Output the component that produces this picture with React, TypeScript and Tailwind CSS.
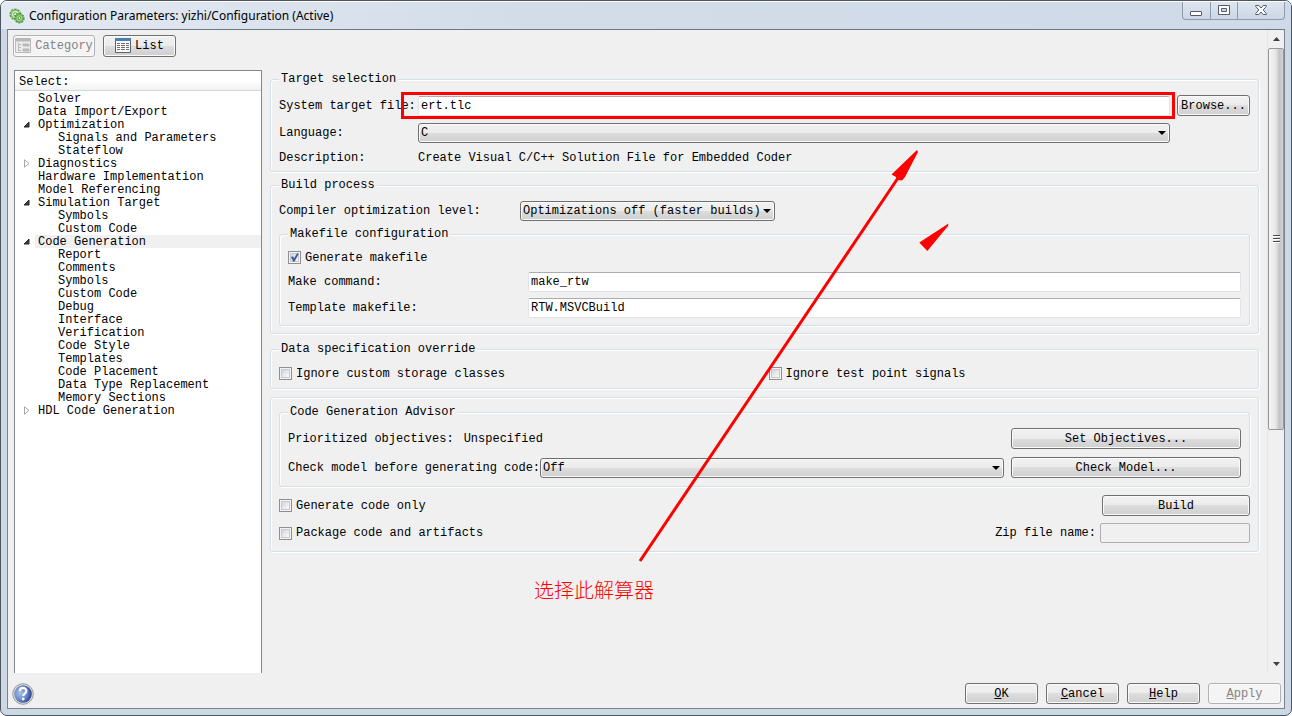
import type { ReactNode } from 'react'

type TreeItem = {
  label: string
  level: 1 | 2
  state?: 'open' | 'closed'
  selected?: boolean
}

const treeItems: TreeItem[] = [
  { label: 'Solver', level: 1 },
  { label: 'Data Import/Export', level: 1 },
  { label: 'Optimization', level: 1, state: 'open' },
  { label: 'Signals and Parameters', level: 2 },
  { label: 'Stateflow', level: 2 },
  { label: 'Diagnostics', level: 1, state: 'closed' },
  { label: 'Hardware Implementation', level: 1 },
  { label: 'Model Referencing', level: 1 },
  { label: 'Simulation Target', level: 1, state: 'open' },
  { label: 'Symbols', level: 2 },
  { label: 'Custom Code', level: 2 },
  { label: 'Code Generation', level: 1, state: 'open', selected: true },
  { label: 'Report', level: 2 },
  { label: 'Comments', level: 2 },
  { label: 'Symbols', level: 2 },
  { label: 'Custom Code', level: 2 },
  { label: 'Debug', level: 2 },
  { label: 'Interface', level: 2 },
  { label: 'Verification', level: 2 },
  { label: 'Code Style', level: 2 },
  { label: 'Templates', level: 2 },
  { label: 'Code Placement', level: 2 },
  { label: 'Data Type Replacement', level: 2 },
  { label: 'Memory Sections', level: 2 },
  { label: 'HDL Code Generation', level: 1, state: 'closed' },
]

function Button({ children, className = '', disabled }: { children: ReactNode; className?: string; disabled?: boolean }) {
  const look = disabled
    ? 'border-[#adb2b5] bg-[#f4f4f4] text-[#838383]'
    : 'border-[#707070] bg-[linear-gradient(#f2f2f2,#ebebeb_50%,#dddddd_50%,#cfcfcf)] text-black'
  return (
    <button
      type="button"
      disabled={disabled}
      className={`flex items-center justify-center whitespace-nowrap rounded-[3px] border shadow-[inset_0_0_0_1px_#fafafa] ${look} ${className}`}
    >
      {children}
    </button>
  )
}

function Select({ id, value, className = '' }: { id: string; value: string; className?: string }) {
  return (
    <div className={`relative h-5 ${className}`}>
      <select
        id={id}
        defaultValue={value}
        className="block h-5 w-full appearance-none rounded-[3px] border border-[#707070] bg-[linear-gradient(#f2f2f2,#ebebeb_50%,#dddddd_50%,#cfcfcf)] pl-[2px] leading-[18px] shadow-[inset_0_0_0_1px_#fafafa]"
      >
        <option>{value}</option>
      </select>
      <svg className="pointer-events-none absolute right-1 top-2 h-1 w-2" viewBox="0 0 8 4">
        <path d="M0 0h8L4 4z" fill="#000" />
      </svg>
    </div>
  )
}

function TextInput({ id, value }: { id: string; value: string }) {
  return (
    <input
      id={id}
      type="text"
      defaultValue={value}
      className="block h-5 w-full min-w-0 rounded-[2px] border border-[#e2e3ea] border-t-[#abadb3] bg-white px-[2px]"
    />
  )
}

function Checkbox({ label, checked }: { label: string; checked?: boolean }) {
  return (
    <label className="flex h-[15px] items-center gap-1">
      <span className="relative size-[13px]">
        <input
          type="checkbox"
          defaultChecked={checked}
          className="peer block size-[13px] appearance-none border border-[#8e8f8f] bg-[linear-gradient(135deg,#c4c9d0,#f7f7f7_75%)] shadow-[inset_0_0_0_1px_#f4f4f4,inset_0_0_0_2px_#c6cad0]"
        />
        <svg className="pointer-events-none absolute inset-0 hidden size-[13px] peer-checked:block" viewBox="0 0 13 13">
          <path d="M3.2 6.2 5 5.6 6 7.8 9.2 2.4 10.4 3 6.4 10.4H5.4Z" fill="#3c56a4" stroke="#3c56a4" strokeWidth=".4" />
        </svg>
      </span>
      <span className="whitespace-nowrap">{label}</span>
    </label>
  )
}

function Group({ title, children, className = '' }: { title?: string; children: ReactNode; className?: string }) {
  return (
    <fieldset
      className={`min-w-0 rounded-[3px] border border-[#d5dfe5] px-2 shadow-[1px_1px_0_#fff,inset_1px_1px_0_#fff] ${className}`}
    >
      {title && <legend className="bg-[#f0f0f0] px-[2px] leading-[14px]">{title}</legend>}
      {children}
    </fieldset>
  )
}

function TitleBar() {
  return (
    <header className="flex h-[27px] items-start justify-between">
      <div className="flex h-[27px] items-center gap-1 pl-2">
        <svg className="size-4" viewBox="0 0 16 16" fill="none">
          <circle cx="6.3" cy="6.3" r="5.1" stroke="#5fa548" strokeWidth="1.6" strokeDasharray="2.2 1" />
          <circle cx="6.3" cy="6.3" r="4.2" fill="#d9eed0" stroke="#6db556" strokeWidth="1.2" />
          <circle cx="6.3" cy="6.3" r="1.7" fill="#f4faf1" stroke="#5a9f46" />
          <circle cx="10.4" cy="10.2" r="4.4" stroke="#4d9137" strokeWidth="1.6" strokeDasharray="2 .9" />
          <circle cx="10.4" cy="10.2" r="3.6" fill="#a7d694" stroke="#63ad4c" strokeWidth="1.2" />
          <circle cx="10.4" cy="10.2" r="1.4" fill="#eef7ea" stroke="#4d9137" />
        </svg>
        <h1 className="font-['Noto_Sans',sans-serif] text-[12px]">
          Configuration Parameters: yizhi/Configuration (Active)
        </h1>
      </div>
      <div className="mr-[6px] flex h-[18px] divide-x divide-[#8f9bad] overflow-hidden rounded-b-[4px] border border-t-0 border-[#8f9bad] bg-[linear-gradient(#dde5ef,#ccd7e5)]">
        <button type="button" aria-label="Minimize" className="flex w-7 items-center justify-center">
          <svg className="h-[15px] w-[13px]" viewBox="0 0 13 15">
            <rect x=".5" y="8.5" width="11" height="4" rx=".5" fill="#fff" stroke="#545b6b" />
          </svg>
        </button>
        <button type="button" aria-label="Maximize" className="flex w-[27px] items-center justify-center">
          <svg className="h-[11px] w-3" viewBox="0 0 12 11">
            <path d="M.5.5h11v9H.5z" fill="#fff" stroke="#545b6b" />
            <path d="M3.5 3.5h5v3h-5z" fill="#cfd9e6" stroke="#545b6b" />
          </svg>
        </button>
        <button type="button" aria-label="Close" className="flex w-[46px] items-center justify-center">
          <svg className="h-[11px] w-3" viewBox="0 0 12 11">
            <path d="M.7.5h3.1L6 3 8.2.5h3.1v1L8.2 5l3.1 3.5v1H8.2L6 7 3.8 9.5H.7v-1L3.8 5 .7 1.5z" fill="#fff" stroke="#545b6b" />
          </svg>
        </button>
      </div>
    </header>
  )
}

function Toolbar() {
  return (
    <div className="flex gap-2 px-[5px] pt-[5px]">
      <Button disabled className="h-[22px] w-[82px] gap-1">
        <svg className="size-4 shrink-0" viewBox="0 0 16 16" fill="none" stroke="#b9b9b9">
          <path d="M.5.5h15v14H.5z" fill="#ececec" />
          <path d="M1 2h14" strokeWidth="3" />
          <path d="M3.5 5v8M3.5 6.5H6M3.5 9.5H6M3.5 12.5H6" />
          <path d="M8 6h6v2H8zM8 11h6v2H8z" fill="#b9b9b9" />
        </svg>
        Category
      </Button>
      <Button className="h-[22px] w-[73px] gap-1">
        <svg className="size-4 shrink-0" viewBox="0 0 16 16" fill="none">
          <path d="M.5.5h15v14H.5z" fill="#fbfbfb" stroke="#5a6270" />
          <path d="M0 0h16v3H0z" fill="#4a7ebb" />
          <path d="M2 5.5h3m1 0h4m1 0h3M2 7.5h3m1 0h4m1 0h3M2 9.5h3m1 0h4m1 0h3M2 11.5h3m1 0h4m1 0h3" stroke="#6e6e6e" />
        </svg>
        List
      </Button>
    </div>
  )
}

function Sidebar() {
  return (
    <nav className="w-62 shrink-0 border border-b-0 border-[#828790] bg-white">
      <h2 className="h-5 border-b border-[#d5d5d5] bg-[linear-gradient(#ffffff_50%,#f1f2f4)] pl-1 leading-[22px]">Select:</h2>
      <ul className="pt-px">
        {treeItems.map((item, i) => (
          <li key={i} className="flex h-[13px] items-center leading-[15px]">
            <span className="flex w-5 shrink-0 justify-end pr-[5px]">
              {item.state === 'open' && (
                <svg className="size-[7px]" viewBox="0 0 7 7">
                  <path d="M6 1v5H1z" fill="#404040" stroke="#262626" />
                </svg>
              )}
              {item.state === 'closed' && (
                <svg className="h-[9px] w-[6px]" viewBox="0 0 6 9">
                  <path d="M.5.8 5 4.5.5 8.2z" fill="#fff" stroke="#a6a6a6" />
                </svg>
              )}
            </span>
            <span
              className={`h-[13px] flex-1 whitespace-nowrap ${item.level === 1 ? 'pl-[3px]' : 'pl-[23px]'} ${item.selected ? 'bg-[#f0f0f0]' : ''}`}
            >
              {item.label}
            </span>
          </li>
        ))}
      </ul>
    </nav>
  )
}

function Settings() {
  return (
    <main className="min-w-0 flex-1 px-2 pt-[2px]">
      <Group title="Target selection" className="pb-[6px] pt-[9px]">
        <div className="grid grid-cols-[139px_1fr_80px] items-center">
          <label htmlFor="target">System target file:</label>
          <div className="relative">
            <TextInput id="target" value="ert.tlc" />
            <div className="pointer-events-none absolute -bottom-[3px] -left-[17px] -right-[5px] -top-1 border-3 border-[#ff0000]" />
          </div>
          <Button className="ml-[7px] h-[21px] w-[73px]">Browse...</Button>
        </div>
        <div className="mt-[7px] grid grid-cols-[139px_1fr_80px] items-center">
          <label htmlFor="language">Language:</label>
          <Select id="language" value="C" />
        </div>
        <div className="mt-2 flex leading-[14px]">
          <span className="w-[139px]">Description:</span>
          <span>Create Visual C/C++ Solution File for Embedded Coder</span>
        </div>
      </Group>

      <Group title="Build process" className="mt-[6px] pb-[7px] pt-[9px]">
        <div className="flex items-center">
          <label htmlFor="level" className="w-[241px]">Compiler optimization level:</label>
          <Select id="level" value="Optimizations off (faster builds)" className="w-[255px]" />
        </div>
        <Group title="Makefile configuration" className="mt-[6px] pb-[7px] pt-[9px]">
          <Checkbox label="Generate makefile" checked />
          <div className="mt-[7px] grid grid-cols-[240px_1fr] items-center gap-y-[6px]">
            <label htmlFor="make">Make command:</label>
            <TextInput id="make" value="make_rtw" />
            <label htmlFor="template">Template makefile:</label>
            <TextInput id="template" value="RTW.MSVCBuild" />
          </div>
        </Group>
      </Group>

      <Group title="Data specification override" className="mt-2 pb-[7px] pt-[10px]">
        <div className="grid grid-cols-2 gap-2">
          <Checkbox label="Ignore custom storage classes" />
          <Checkbox label="Ignore test point signals" />
        </div>
      </Group>

      <Group className="mt-2 pb-2 pt-[7px]">
        <Group title="Code Generation Advisor" className="pb-2 pt-[9px]">
          <div className="grid grid-cols-[1fr_230px] items-center gap-x-[7px] gap-y-2">
            <div className="flex gap-[10px]">
              <span>Prioritized objectives:</span>
              <span>Unspecified</span>
            </div>
            <Button className="h-[21px]">Set Objectives...</Button>
            <div className="flex items-center">
              <label htmlFor="check" className="w-63 shrink-0 whitespace-nowrap">Check model before generating code:</label>
              <Select id="check" value="Off" className="flex-1" />
            </div>
            <Button className="h-[21px]">Check Model...</Button>
          </div>
        </Group>
        <div className="mt-2 flex items-center justify-between">
          <Checkbox label="Generate code only" />
          <Button className="h-[21px] w-37">Build</Button>
        </div>
        <div className="mt-[7px] flex items-center justify-between">
          <Checkbox label="Package code and artifacts" />
          <div className="flex items-center gap-1">
            <label htmlFor="zip">Zip file name:</label>
            <input id="zip" type="text" disabled className="h-5 w-[150px] rounded-[2px] border border-[#afafaf] bg-[#f0f0f0] px-1" />
          </div>
        </div>
      </Group>
    </main>
  )
}

function ScrollBar() {
  return (
    <div className="flex w-[17px] shrink-0 flex-col border-l border-[#e6e6e6] bg-[#f0f0f0]">
      <button type="button" aria-label="Scroll up" className="flex h-[18px] items-center justify-center">
        <svg className="h-1 w-[7px]" viewBox="0 0 7 4">
          <path d="M3.5 0 7 4H0z" fill="#404040" />
        </svg>
      </button>
      <div className="flex-1">
        <div className="flex h-[63%] items-center justify-center rounded-[2px] border border-[#979797] bg-[linear-gradient(90deg,#f5f5f5,#e9e9eb_45%,#c4c4c8_75%,#d2d2d5)]">
          <svg className="h-2 w-[7px]" viewBox="0 0 7 8">
            <path d="M0 .5h7M0 3.5h7M0 6.5h7" stroke="#4a4a4a" />
            <path d="M0 1.5h7M0 4.5h7M0 7.5h7" stroke="#fff" />
          </svg>
        </div>
      </div>
      <button type="button" aria-label="Scroll down" className="flex h-[18px] items-center justify-center">
        <svg className="h-1 w-[7px]" viewBox="0 0 7 4">
          <path d="M0 0h7L3.5 4z" fill="#404040" />
        </svg>
      </button>
    </div>
  )
}

function Footer() {
  return (
    <footer className="flex h-[35px] shrink-0 items-start justify-between pl-1 pr-[3px] pt-[10px]">
      <button type="button" aria-label="Help">
        <svg className="size-[22px]" viewBox="0 0 22 22">
          <defs>
            <radialGradient id="ball" cx=".35" cy=".45" r=".7">
              <stop offset="0" stopColor="#a9bfe8" />
              <stop offset=".5" stopColor="#6f8fce" />
              <stop offset="1" stopColor="#1d3885" />
            </radialGradient>
          </defs>
          <circle cx="11" cy="11" r="10.3" fill="#dcdcdc" stroke="#9b9b9b" />
          <circle cx="11" cy="11" r="8.8" fill="url(#ball)" />
          <path d="M7.8 8.2C7.8 3.8 14.4 4 14.4 8c0 2.4-3.2 2.6-3.2 5" fill="none" stroke="#fff" strokeWidth="2.2" />
          <circle cx="11.2" cy="16" r="1.4" fill="#fff" />
        </svg>
      </button>
      <div className="flex gap-2">
        <Button className="h-[21px] w-[73px]"><span><u>O</u>K</span></Button>
        <Button className="h-[21px] w-[73px]"><span><u>C</u>ancel</span></Button>
        <Button className="h-[21px] w-[73px]"><span><u>H</u>elp</span></Button>
        <Button disabled className="h-[21px] w-[73px]"><span><u>A</u>pply</span></Button>
      </div>
    </footer>
  )
}

// red marks drawn over the dialog
function Annotations() {
  return (
    <div className="pointer-events-none absolute inset-0 overflow-hidden">
      <svg className="absolute left-[637px] top-[147px] h-[416px] w-[314px]" viewBox="638 148 314 416" fill="#ff0000">
        <path d="M640 561 898 178" stroke="#ff0000" strokeWidth="3" />
        <path d="M917 150 891.5 174.5 896 177 897 180 902 180.5 905 177 918 152z" />
        <path d="M948.5 223.5 919.3 242.5 927.3 251 948 226z" />
      </svg>
      <p className="absolute left-[533px] top-[575px] whitespace-nowrap font-['Noto_Sans_CJK_SC',sans-serif] text-[20px] font-light leading-7 text-[#ff0000]">
        选择此解算器
      </p>
    </div>
  )
}

export default function App() {
  return (
    <div className="relative flex min-h-screen flex-col rounded-[7px] border border-[#4d5561] bg-[#cdd8e5] px-[6px] pb-[6px] font-['Liberation_Mono','Noto_Sans_CJK_SC',monospace] text-[12px] leading-4 text-black">
      <div className="-mx-[6px] rounded-t-[6px] border-t border-white bg-[linear-gradient(90deg,#e3e9f2,#d3ddea_40%,#cfdae8)]">
        <TitleBar />
      </div>
      <div className="flex flex-1 flex-col border border-[#7b8490] border-t-[#6d7783] bg-[#f0f0f0]">
        <div className="flex flex-1">
          <div className="flex flex-1 flex-col">
            <Toolbar />
            <div className="flex flex-1 pl-[6px] pt-[13px]">
              <Sidebar />
              <Settings />
            </div>
          </div>
          <ScrollBar />
        </div>
        <Footer />
      </div>
      <Annotations />
    </div>
  )
}
